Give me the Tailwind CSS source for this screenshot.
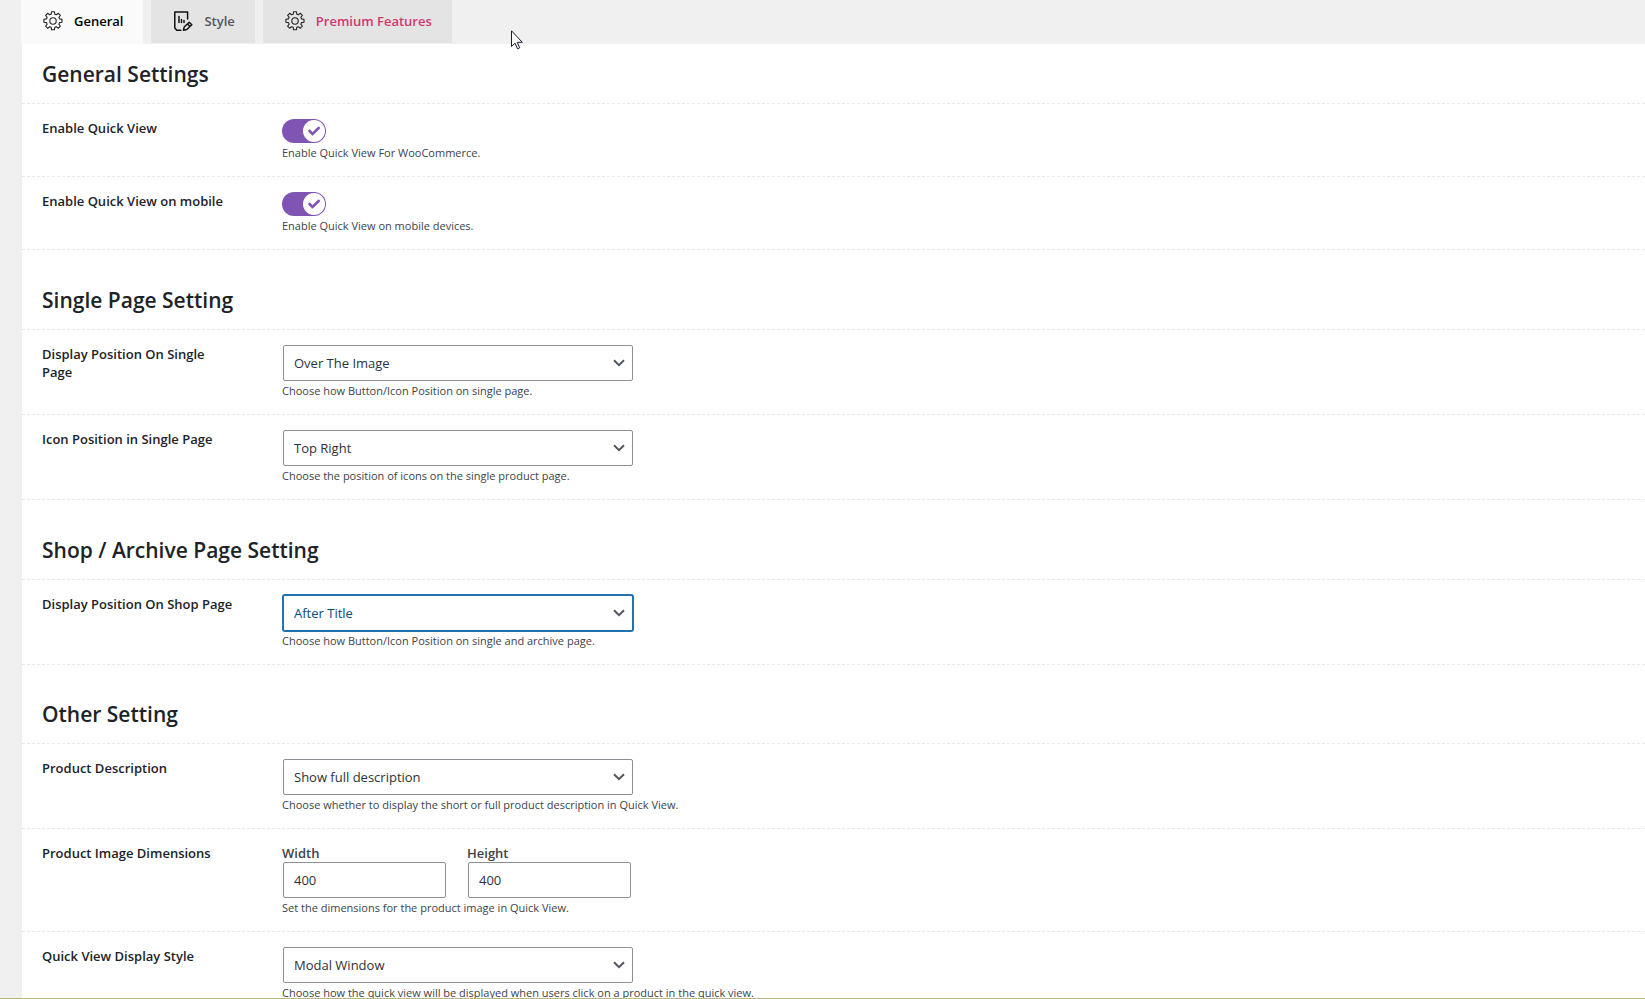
<!DOCTYPE html>
<html lang="en">
<head>
<meta charset="utf-8">
<title>Quick View Settings</title>
<script src="https://cdn.jsdelivr.net/npm/@tailwindcss/browser@4"></script>
</head>
<body class="h-screen overflow-hidden bg-[#f0f0f0] font-['Segoe_UI','Open_Sans',sans-serif] text-[13px] leading-[18px] text-[#3c434a]">
<svg class="hidden" aria-hidden="true">
  <symbol id="gear" viewBox="0 0 20 20" fill="none" stroke="#222" stroke-width="1.1" stroke-linejoin="round">
    <path d="M8.6 .7h2.8l.4 2.5 1.5.6 2.1-1.5 2 2-1.5 2.1.6 1.5 2.5.4v2.9l-2.5.4-.6 1.5 1.5 2.1-2 2-2.1-1.5-1.5.6-.4 2.5H8.6l-.4-2.5-1.5-.6-2.1 1.5-2-2 1.5-2.1-.6-1.5-2.6-.4V8.300l2.600-.4.6-1.500-1.500-2.100 2-2 2.100 1.500 1.500-.6z"/>
    <circle cx="10" cy="10" r="3.200"/>
  </symbol>
  <symbol id="chevron" viewBox="0 0 12 8" fill="none" stroke="#50575e" stroke-width="2">
    <path d="M1 1.200l5 5 5-5"/>
  </symbol>
  <symbol id="knob" viewBox="0 0 22 22">
    <circle cx="11" cy="11" r="11" fill="#fff"/>
    <path d="M6.500 11l3 3 6.200-6" fill="none" stroke="#7f54b3" stroke-width="2.600" stroke-linecap="round"/>
  </symbol>
</svg>

<nav class="flex h-11 items-start gap-2 pl-[21px] text-[13px] font-semibold" aria-label="Settings tabs">
  <button type="button" class="flex h-11 items-center gap-[11px] bg-[#fafafa] pr-5 pb-0.5 pl-[22px] text-black"><svg class="size-5"><use href="#gear"/></svg>General</button>
  <button type="button" class="flex h-[43px] items-center gap-[11px] bg-[#e4e4e4] pr-5 pb-px pl-[22px] text-[#50575e]"><svg class="size-5" viewBox="0 0 20 20" fill="none" stroke="#111" stroke-width="1.500" stroke-linecap="round" stroke-linejoin="round"><path d="M14.600 8V1H1.800v16l2 2.200h4M6 5.500v6M8.500 8.500v3M11 9.500v2"/><path d="M10.500 19.200l.7-3.200 5-4.800 2.600 2.600-5 4.700zM14.500 13l2.500 2.500"/></svg>Style</button>
  <button type="button" class="flex h-[43px] items-center gap-[11px] bg-[#e4e4e4] pr-5 pb-px pl-[22px] text-[#d0386e]"><svg class="size-5"><use href="#gear"/></svg>Premium Features</button>
</nav>

<main class="ml-[22px] min-h-screen bg-white">
  <form>
    <section>
      <h2 class="flex h-[59px] items-center px-5 text-[21px] font-semibold text-[#1d2327]">General Settings</h2>
      <div class="border-b border-dashed border-[#e8e8e8]">
        <div class="flex border-t border-dashed border-[#e8e8e8] px-5 py-[15px]">
          <div class="w-60 shrink-0 pr-12 font-semibold text-[#1d2327]"><label for="enable">Enable Quick View</label></div>
          <div>
            <div class="relative h-6 w-11"><input id="enable" type="checkbox" checked class="block h-6 w-11 appearance-none rounded-full bg-[#7f54b3]"><svg class="pointer-events-none absolute top-px right-px size-[22px]"><use href="#knob"/></svg></div>
            <p class="mt-0.5 text-[11px] leading-4">Enable Quick View For WooCommerce.</p>
          </div>
        </div>
        <div class="flex border-t border-dashed border-[#e8e8e8] px-5 py-[15px]">
          <div class="w-60 shrink-0 pr-12 font-semibold text-[#1d2327]"><label for="mobile">Enable Quick View on mobile</label></div>
          <div>
            <div class="relative h-6 w-11"><input id="mobile" type="checkbox" checked class="block h-6 w-11 appearance-none rounded-full bg-[#7f54b3]"><svg class="pointer-events-none absolute top-px right-px size-[22px]"><use href="#knob"/></svg></div>
            <p class="mt-0.5 text-[11px] leading-4">Enable Quick View on mobile devices.</p>
          </div>
        </div>
      </div>
    </section>

    <section class="pt-5">
      <h2 class="flex h-[59px] items-center px-5 text-[21px] font-semibold text-[#1d2327]">Single Page Setting</h2>
      <div class="border-b border-dashed border-[#e8e8e8]">
        <div class="flex border-t border-dashed border-[#e8e8e8] px-5 py-[15px]">
          <div class="w-60 shrink-0 pr-12 font-semibold text-[#1d2327]"><label for="single-pos">Display Position On Single Page</label></div>
          <div>
            <div class="relative ml-px w-[350px]"><select id="single-pos" class="block h-9 w-full appearance-none rounded-[2px] border border-[#8c8f94] bg-white px-2.5 text-[13px] text-[#2c3338]"><option>Over The Image</option></select><svg class="pointer-events-none absolute top-3.5 right-2 h-2 w-3"><use href="#chevron"/></svg></div>
            <p class="mt-0.5 text-[11px] leading-4">Choose how Button/Icon Position on single page.</p>
          </div>
        </div>
        <div class="flex border-t border-dashed border-[#e8e8e8] px-5 py-[15px]">
          <div class="w-60 shrink-0 pr-12 font-semibold text-[#1d2327]"><label for="icon-pos">Icon Position in Single Page</label></div>
          <div>
            <div class="relative ml-px w-[350px]"><select id="icon-pos" class="block h-9 w-full appearance-none rounded-[2px] border border-[#8c8f94] bg-white px-2.5 text-[13px] text-[#2c3338]"><option>Top Right</option></select><svg class="pointer-events-none absolute top-3.5 right-2 h-2 w-3"><use href="#chevron"/></svg></div>
            <p class="mt-0.5 text-[11px] leading-4">Choose the position of icons on the single product page.</p>
          </div>
        </div>
      </div>
    </section>

    <section class="pt-5">
      <h2 class="flex h-[59px] items-center px-5 text-[21px] font-semibold text-[#1d2327]">Shop / Archive Page Setting</h2>
      <div class="border-b border-dashed border-[#e8e8e8]">
        <div class="flex border-t border-dashed border-[#e8e8e8] px-5 py-[15px]">
          <div class="w-60 shrink-0 pr-12 font-semibold text-[#1d2327]"><label for="shop-pos">Display Position On Shop Page</label></div>
          <div>
            <div class="relative ml-px w-[350px]"><select id="shop-pos" class="block h-9 w-full appearance-none rounded-[2px] border border-[#2271b1] bg-white px-2.5 text-[13px] text-[#0a4b78] ring-1 ring-[#2271b1]"><option>After Title</option></select><svg class="pointer-events-none absolute top-3.5 right-2 h-2 w-3"><use href="#chevron"/></svg></div>
            <p class="mt-0.5 text-[11px] leading-4">Choose how Button/Icon Position on single and archive page.</p>
          </div>
        </div>
      </div>
    </section>

    <section class="pt-5">
      <h2 class="flex h-[58px] items-center px-5 text-[21px] font-semibold text-[#1d2327]">Other Setting</h2>
      <div class="border-b border-dashed border-[#e8e8e8]">
        <div class="flex border-t border-dashed border-[#e8e8e8] px-5 py-[15px]">
          <div class="w-60 shrink-0 pr-12 font-semibold text-[#1d2327]"><label for="desc">Product Description</label></div>
          <div>
            <div class="relative ml-px w-[350px]"><select id="desc" class="block h-9 w-full appearance-none rounded-[2px] border border-[#8c8f94] bg-white px-2.5 text-[13px] text-[#2c3338]"><option>Show full description</option></select><svg class="pointer-events-none absolute top-3.5 right-2 h-2 w-3"><use href="#chevron"/></svg></div>
            <p class="mt-0.5 text-[11px] leading-4">Choose whether to display the short or full product description in Quick View.</p>
          </div>
        </div>
        <div class="flex border-t border-dashed border-[#e8e8e8] px-5 py-[15px]">
          <div class="w-60 shrink-0 pr-12 font-semibold text-[#1d2327]">Product Image Dimensions</div>
          <div>
            <div class="flex gap-[21px]">
              <div><label for="w" class="block font-semibold">Width</label><input id="w" type="text" value="400" class="ml-px block h-9 w-[163px] rounded-[2px] border border-[#8c8f94] bg-white px-2.5 text-[13px] text-[#2c3338]"></div>
              <div><label for="h" class="block font-semibold">Height</label><input id="h" type="text" value="400" class="ml-px block h-9 w-[163px] rounded-[2px] border border-[#8c8f94] bg-white px-2.5 text-[13px] text-[#2c3338]"></div>
            </div>
            <p class="mt-0.5 text-[11px] leading-4">Set the dimensions for the product image in Quick View.</p>
          </div>
        </div>
        <div class="flex border-t border-dashed border-[#e8e8e8] px-5 py-[15px]">
          <div class="w-60 shrink-0 pr-12 font-semibold text-[#1d2327]"><label for="style">Quick View Display Style</label></div>
          <div>
            <div class="relative ml-px w-[350px]"><select id="style" class="block h-9 w-full appearance-none rounded-[2px] border border-[#8c8f94] bg-white px-2.5 text-[13px] text-[#2c3338]"><option>Modal Window</option></select><svg class="pointer-events-none absolute top-3.5 right-2 h-2 w-3"><use href="#chevron"/></svg></div>
            <p class="mt-0.5 text-[11px] leading-4">Choose how the quick view will be displayed when users click on a product in the quick view.</p>
          </div>
        </div>
      </div>
    </section>
  </form>
</main>
<div class="fixed inset-x-0 bottom-0 h-px bg-[#b5b878]"></div>
<svg class="pointer-events-none fixed top-[30px] left-[511px] h-5 w-3" viewBox="0 0 12 20" fill="#fff" stroke="#1a1a2e" stroke-width="1"><path d="M.5 .8v15.700l3.500-3.300 2.500 5.600 2.200-1-2.400-5.500h5z"/></svg>
</body>
</html>
